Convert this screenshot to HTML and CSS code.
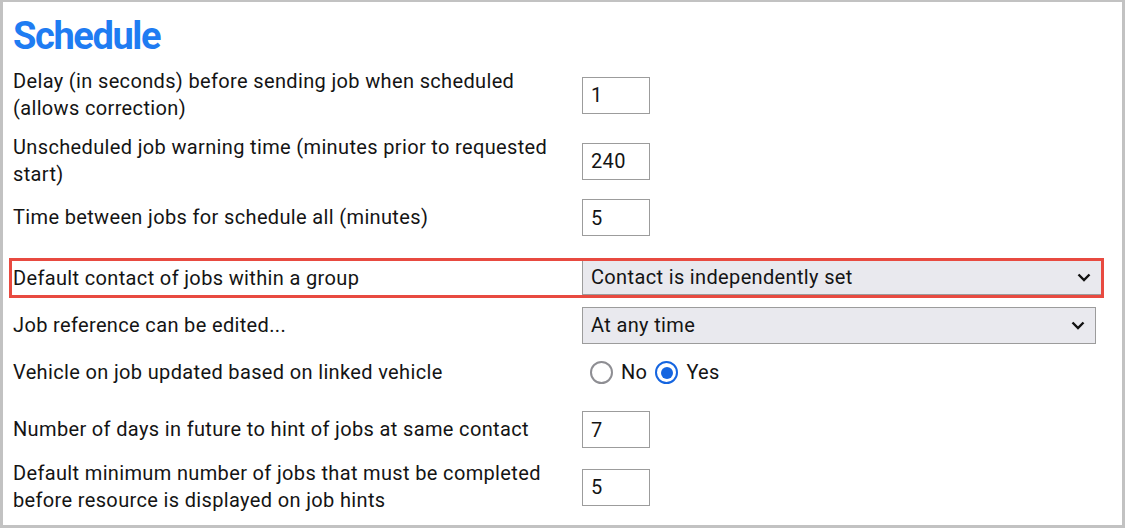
FILE: index.html
```html
<!DOCTYPE html>
<html lang="en">
<head>
    <meta charset="UTF-8">
    <meta name="viewport" content="width=device-width, initial-scale=1.0">
    <title>Schedule Settings</title>
    <link rel="stylesheet" href="styles.css">
</head>
<body>
  <div class="panel">
    <h1 class="title">Schedule</h1>

    <div class="row">
      <label class="row-label">Delay (in seconds) before sending job when scheduled (allows correction)</label>
      <div class="row-field"><input class="num-input" type="text" value="1"></div>
    </div>

    <div class="row gap-12">
      <label class="row-label">Unscheduled job warning time (minutes prior to requested start)</label>
      <div class="row-field"><input class="num-input" type="text" value="240"></div>
    </div>

    <div class="row gap-11">
      <label class="row-label">Time between jobs for schedule all (minutes)</label>
      <div class="row-field"><input class="num-input" type="text" value="5"></div>
    </div>

    <!-- highlighted setting -->
    <div class="row row-highlight gap-22">
      <label class="row-label">Default contact of jobs within a group</label>
      <div class="row-field">
        <div class="select">
          <span>Contact is independently set</span>
          <svg class="chevron" width="14" height="9" viewBox="0 0 14 9"><polyline points="1.5,1.5 7,7 12.5,1.5" fill="none" stroke="#111" stroke-width="2.4"/></svg>
        </div>
      </div>
    </div>

    <div class="row gap-9">
      <label class="row-label">Job reference can be edited...</label>
      <div class="row-field">
        <div class="select">
          <span>At any time</span>
          <svg class="chevron" width="14" height="9" viewBox="0 0 14 9"><polyline points="1.5,1.5 7,7 12.5,1.5" fill="none" stroke="#111" stroke-width="2.4"/></svg>
        </div>
      </div>
    </div>

    <div class="row gap-10">
      <label class="row-label">Vehicle on job updated based on linked vehicle</label>
      <div class="row-field radios">
        <label class="radio"><span class="radio-dot"></span>No</label>
        <label class="radio"><span class="radio-dot checked"></span>Yes</label>
      </div>
    </div>

    <div class="row gap-20">
      <label class="row-label">Number of days in future to hint of jobs at same contact</label>
      <div class="row-field"><input class="num-input" type="text" value="7"></div>
    </div>

    <div class="row gap-12">
      <label class="row-label">Default minimum number of jobs that must be completed before resource is displayed on job hints</label>
      <div class="row-field"><input class="num-input" type="text" value="5"></div>
    </div>
  </div>
</body>
</html>
```

FILE: styles.css
```css
:root {
  --clr-text: #141414;
  --clr-blue: #1f7cf2;
  --clr-radio: #1565e0;
  --clr-red: #e84a40;
  --clr-frame: #c2c2c2;
  --clr-field-border: #9c9c9c;
  --clr-select-bg: #e9e9ee;
}
* { margin: 0; padding: 0; box-sizing: border-box; }
body {
  font-family: Roboto, 'Noto Sans', sans-serif;
  color: var(--clr-text);
  background: #fff;
  letter-spacing: 0.35px;
}
.panel {
  width: 1125px;
  height: 528px;
  border: 3px solid var(--clr-frame);
  border-top-width: 2px;
  padding: 12px 26px 0 10px;
  overflow: hidden;
}
.title {
  font-size: 38px;
  line-height: 44px;
  font-weight: 700;
  color: var(--clr-blue);
  letter-spacing: -1.4px;
  margin-bottom: 10px;
}
.row {
  display: grid;
  grid-template-columns: 569px 1fr;
  align-items: center;
  font-size: 20px;
  line-height: 27px;
}
.gap-9 { margin-top: 9px; }
.gap-10 { margin-top: 10px; }
.gap-11 { margin-top: 11px; }
.gap-12 { margin-top: 12px; }
.gap-20 { margin-top: 20px; }
.gap-22 { margin-top: 22px; }
.row-label {
  padding-right: 24px;
}
.row-field {
  display: flex;
  align-items: center;
}
.num-input {
  width: 68px;
  height: 37px;
  border: 1px solid var(--clr-field-border);
  padding: 0 8px;
  font-family: inherit;
  font-size: 20px;
  letter-spacing: inherit;
  color: var(--clr-text);
  background: #fff;
  outline: none;
}
.select {
  flex: 1;
  height: 37px;
  display: flex;
  align-items: center;
  justify-content: space-between;
  padding: 0 10px 0 8px;
  background: var(--clr-select-bg);
  border: 1px solid var(--clr-field-border);
}
.row-highlight {
  margin-left: -4px;
  margin-right: -8px;
  height: 40px;
  border: 3px solid var(--clr-red);
  padding-left: 1px;
}
.row-highlight .select {
  height: 34px;
  border-top: none;
  border-right: none;
}
.radios {
  height: 37px;
  padding-left: 8px;
  gap: 8px;
}
.radio {
  display: flex;
  align-items: center;
  gap: 8px;
}
.radio-dot {
  width: 23px;
  height: 23px;
  border-radius: 50%;
  border: 2.5px solid #8e8e93;
  background: #fff;
  position: relative;
}
.radio-dot.checked { border-color: var(--clr-radio); }
.radio-dot.checked::after {
  content: "";
  position: absolute;
  inset: 3.5px;
  border-radius: 50%;
  background: var(--clr-radio);
}
```
